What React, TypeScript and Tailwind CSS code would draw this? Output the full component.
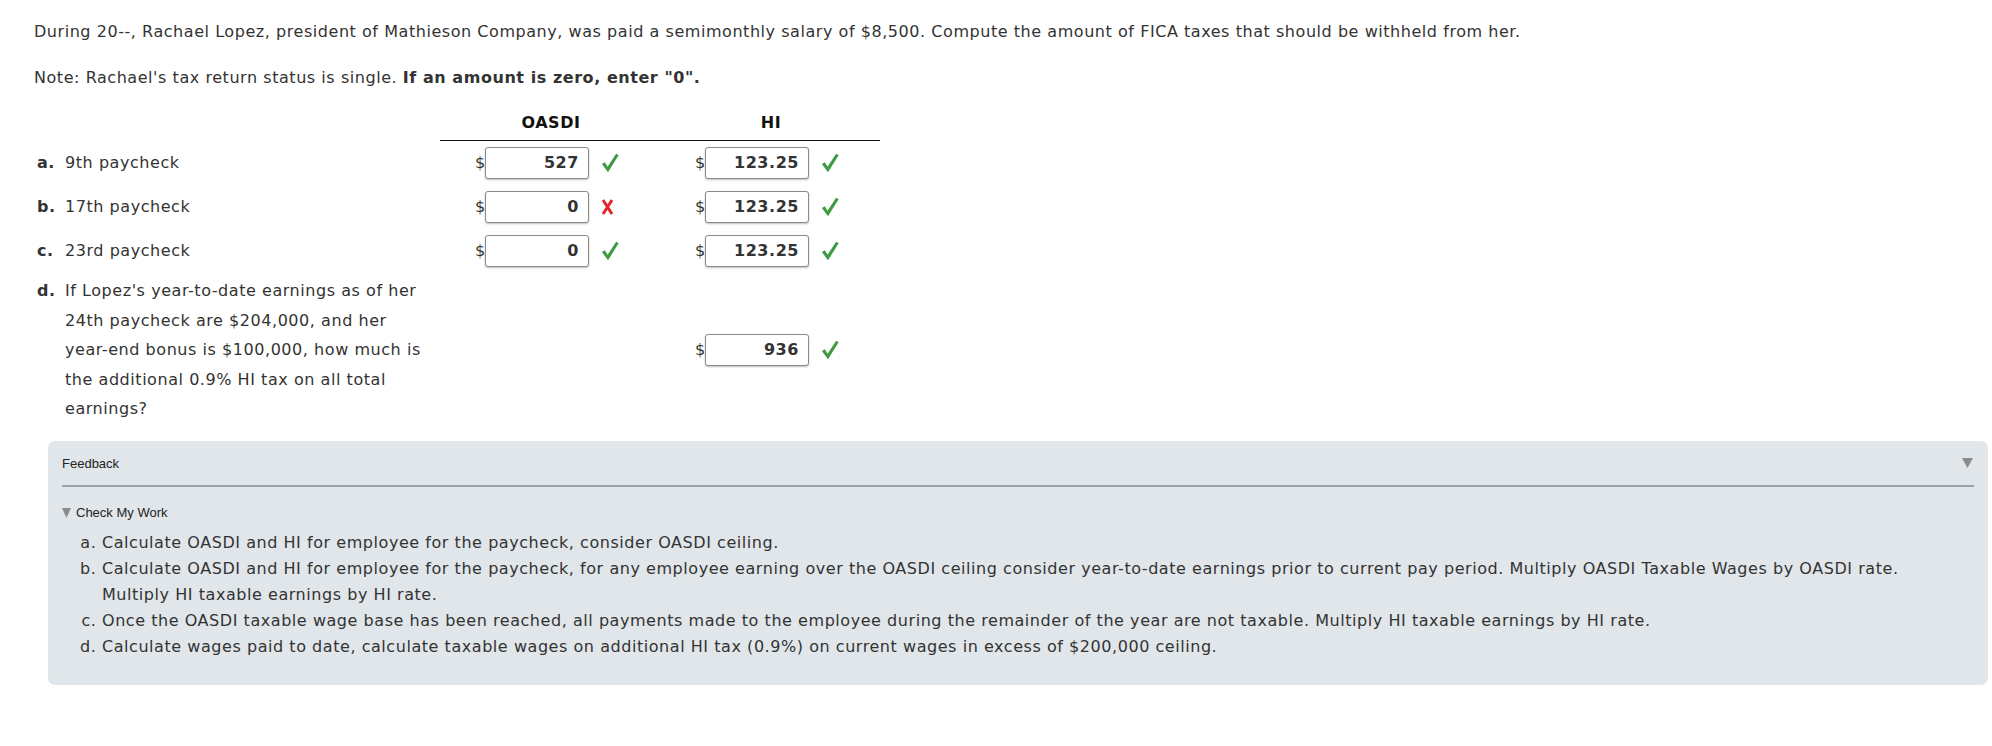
import React from "react";

const font = { fontFamily: '"DejaVu Sans", Verdana, sans-serif' };

function Check() {
  return (
    <svg width="18" height="20" viewBox="0 0 17 19" aria-hidden className="shrink-0">
      <path d="M0.8 10.5 L3.6 8.8 L6.2 13 L14.3 0.6 L16.7 2.2 L6.6 18.4 Z" fill="#3f9b3f" />
    </svg>
  );
}

function Cross() {
  return (
    <svg width="13" height="18" viewBox="0 0 13 18" aria-hidden className="shrink-0">
      <path d="M2 2 L11 16 M11 2 L2 16" fill="none" stroke="#e3262b" strokeWidth="3" />
    </svg>
  );
}

function Amount({ value, ok }: { value: string; ok: boolean }) {
  return (
    <div className="flex w-[220px] items-center pl-[35px]">
      <span className="w-[10px] text-[16px] tracking-normal text-[#333]">$</span>
      <div className="flex h-[32px] w-[104px] items-center justify-end rounded-[3px] border border-[#8a8a8a] bg-white pr-[9px] text-[16px] font-bold text-[#333] shadow-[0_1px_2px_rgba(0,0,0,0.25)]">
        {value}
      </div>
      <span className="ml-[12px] flex items-center">{ok ? <Check /> : <Cross />}</span>
    </div>
  );
}

const rows = [
  { k: "a.", label: "9th paycheck", oasdi: "527", oOk: true, hi: "123.25" },
  { k: "b.", label: "17th paycheck", oasdi: "0", oOk: false, hi: "123.25" },
  { k: "c.", label: "23rd paycheck", oasdi: "0", oOk: true, hi: "123.25" },
];

const hints = [
  "Calculate OASDI and HI for employee for the paycheck, consider OASDI ceiling.",
  "Calculate OASDI and HI for employee for the paycheck, for any employee earning over the OASDI ceiling consider year-to-date earnings prior to current pay period. Multiply OASDI Taxable Wages by OASDI rate. Multiply HI taxable earnings by HI rate.",
  "Once the OASDI taxable wage base has been reached, all payments made to the employee during the remainder of the year are not taxable. Multiply HI taxable earnings by HI rate.",
  "Calculate wages paid to date, calculate taxable wages on additional HI tax (0.9%) on current wages in excess of $200,000 ceiling.",
];

export default function App() {
  return (
    <div className="min-h-[746px] bg-white text-[#333] tracking-[0.55px]" style={font}>
      <div className="pl-[34px] pt-[20px] text-[16px]">
        <p className="leading-[24px]">
          During 20--, Rachael Lopez, president of Mathieson Company, was paid a semimonthly salary of $8,500. Compute the amount of FICA taxes that should be withheld from her.
        </p>
        <p className="mt-[22px] leading-[24px]">
          Note: Rachael's tax return status is single. <b>If an amount is zero, enter "0".</b>
        </p>
      </div>

      <div className="mt-[15px] pl-[34px] text-[16px]">
        <div className="flex">
          <div className="w-[406px]" />
          <div className="flex h-[36px] w-[440px] items-center border-b border-[#111] font-bold text-[#111]">
            <div className="w-[220px] pl-[2px] text-center">OASDI</div>
            <div className="w-[220px] pl-[2px] text-center">HI</div>
          </div>
        </div>

        {rows.map((r) => (
          <div key={r.k} className="flex h-[44px] items-center">
            <div className="flex w-[406px] pl-[3px]">
              <span className="w-[28px] font-bold">{r.k}</span>
              <span>{r.label}</span>
            </div>
            <Amount value={r.oasdi} ok={r.oOk} />
            <Amount value={r.hi} ok />
          </div>
        ))}

        <div className="flex items-center pt-[3px]">
          <div className="flex w-[406px] pl-[3px] leading-[29.5px]">
            <span className="w-[28px] shrink-0 font-bold">d.</span>
            <span className="w-[365px]">
              If Lopez's year-to-date earnings as of her 24th paycheck are $204,000, and her year-end bonus is $100,000, how much is the additional 0.9% HI tax on all total earnings?
            </span>
          </div>
          <div className="w-[220px]" />
          <Amount value="936" ok />
        </div>
      </div>

      <div className="mt-[17px] ml-[48px] mr-[4px] rounded-[7px] bg-[#e0e6ea] px-[14px] pb-[25px] pt-[13px]">
        <div className="flex items-center justify-between tracking-normal" style={{ fontFamily: '"Liberation Sans", Arial, sans-serif' }}>
          <span className="text-[13px] text-[#222]">Feedback</span>
          <svg width="11" height="10" viewBox="0 0 11 10" aria-hidden className="mr-[1px]">
            <path d="M0 0 H11 L5.5 10 Z" fill="#8c8c8c" />
          </svg>
        </div>
        <div className="mt-[12px] h-[2px] bg-[#9aa0a3]" />
        <div className="mt-[16px] flex items-center text-[13px] tracking-normal text-[#222]" style={{ fontFamily: '"Liberation Sans", Arial, sans-serif' }}>
          <svg width="9" height="10" viewBox="0 0 9 10" aria-hidden className="mr-[5px]">
            <path d="M0 0 H9 L4.5 10 Z" fill="#8c8c8c" />
          </svg>
          Check My Work
        </div>
        <ol className="mt-[7px] list-[lower-alpha] pl-[40px] pr-[70px] text-[16px] leading-[26px] text-[#333]">
          {hints.map((h) => (
            <li key={h}>{h}</li>
          ))}
        </ol>
      </div>
    </div>
  );
}
